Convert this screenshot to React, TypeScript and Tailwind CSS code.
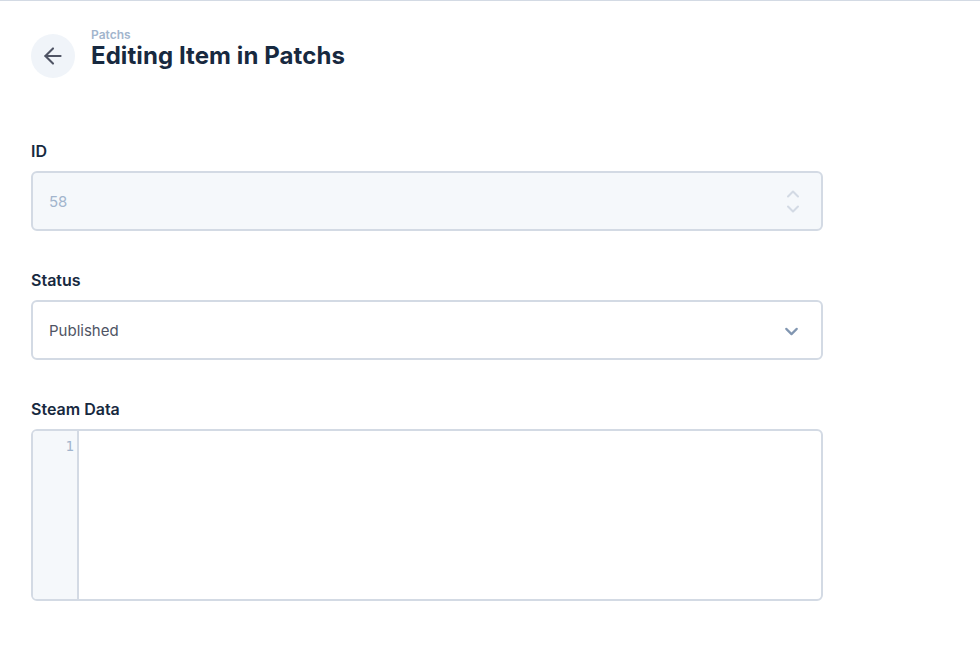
import { ArrowLeft, ChevronDown, ChevronUp } from 'lucide-react';

/** Field label shared by the form rows. */
function FieldLabel({ children }: { children: string }) {
  return (
    <div className="h-[19px] leading-[19px] text-[16px] font-semibold text-[#172940] mb-[10px]">
      {children}
    </div>
  );
}

export default function App() {
  return (
    <div
      className="w-[980px] h-[668px] bg-white border-t border-[#d3dae4] overflow-hidden"
      style={{ fontFamily: 'Inter, "Noto Sans", sans-serif' }}
    >
      {/* Header */}
      <div className="flex items-start gap-4 pl-[31px] pt-[33px]">
        <button
          type="button"
          aria-label="Back"
          className="w-11 h-11 rounded-full bg-[#f0f4f9] flex items-center justify-center text-[#4f5464]"
        >
          <ArrowLeft size={26} strokeWidth={1.9} />
        </button>
        <div className="flex flex-col -mt-[5px]">
          <span className="text-[12px] leading-[12px] font-semibold text-[#a2b5cd]">Patchs</span>
          <h1 className="text-[24px] leading-[30px] font-bold text-[#172940] tracking-[0.08px]">
            Editing Item in Patchs
          </h1>
        </div>
      </div>

      {/* Form */}
      <div className="pl-[31px] w-[823px] mt-[64px] flex flex-col gap-[40px]">
        <div>
          <FieldLabel>ID</FieldLabel>
          <div className="h-[60px] rounded-md border-2 border-[#d3dae4] bg-[#f5f8fb] flex items-center px-4 pt-[2px]">
            <span className="flex-1 text-[15px] text-[#a2b5cd]">58</span>
            <div className="flex flex-col items-center text-[#d3dae4] -space-y-[5px] mr-[2px] -mt-[2px]">
              <ChevronUp size={20} strokeWidth={2.4} />
              <ChevronDown size={20} strokeWidth={2.4} />
            </div>
          </div>
        </div>

        <div>
          <FieldLabel>Status</FieldLabel>
          <div className="h-[60px] rounded-md border-2 border-[#d3dae4] bg-white flex items-center px-4 pt-[2px]">
            <span className="flex-1 text-[15px] text-[#4f5464]">Published</span>
            <ChevronDown size={21} strokeWidth={2.5} className="text-[#8196b1] mr-[3px]" />
          </div>
        </div>

        <div>
          <FieldLabel>Steam Data</FieldLabel>
          <div className="h-[172px] rounded-md border-2 border-[#d3dae4] bg-white flex overflow-hidden">
            <div className="w-[46px] bg-[#f5f8fb] border-r-2 border-[#d3dae4] pt-[2px] pr-[3px] text-right">
              <span
                className="text-[14px] leading-[18px] text-[#a2b5cd]"
                style={{ fontFamily: '"DejaVu Sans Mono", monospace' }}
              >
                1
              </span>
            </div>
            <div className="flex-1" />
          </div>
        </div>
      </div>
    </div>
  );
}
